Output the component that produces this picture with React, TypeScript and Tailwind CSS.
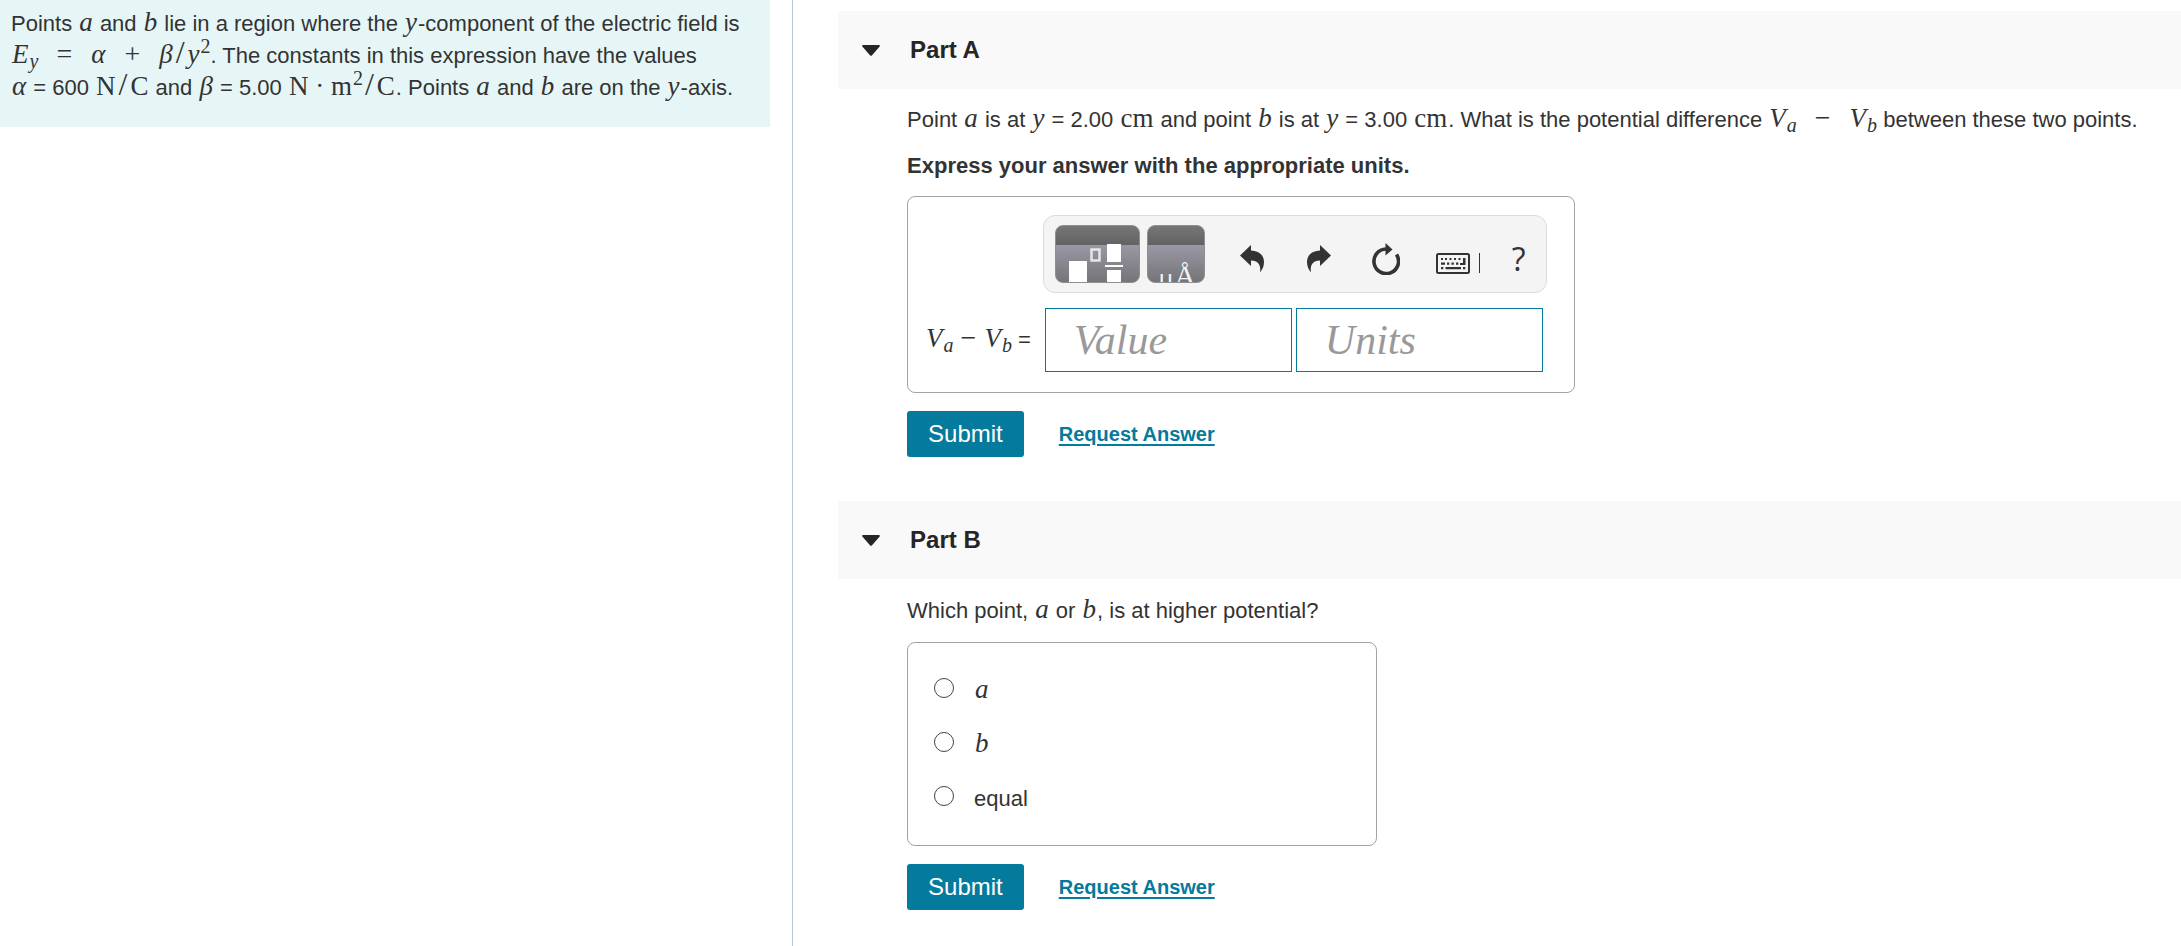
import { useState, type ReactNode } from "react";

const SERIF = "font-['Liberation_Serif',serif] leading-[0]";

function Var({ children }: { children: ReactNode }) {
  return <i className={`${SERIF} mx-px text-[27px] italic`}>{children}</i>;
}

function Unit({ children }: { children: ReactNode }) {
  return <span className={`${SERIF} mx-px text-[27px]`}>{children}</span>;
}

function Slash() {
  return <span className={`${SERIF} mx-[2px] text-[32px]`}>/</span>;
}

function Op({ children, wide = false }: { children: ReactNode; wide?: boolean }) {
  return <span className={`${SERIF} text-[28px] ${wide ? "mx-[18px]" : "mx-[7px]"}`}>{children}</span>;
}

function Sub({ children }: { children: ReactNode }) {
  return <sub className={`${SERIF} text-xl leading-[0] italic`}>{children}</sub>;
}

function Sup({ children }: { children: ReactNode }) {
  return <sup className={`${SERIF} text-xl leading-[0]`}>{children}</sup>;
}

function PotentialDifference({ wide = false }: { wide?: boolean }) {
  return (
    <span className="whitespace-nowrap">
      <Var>V</Var>
      <Sub>a</Sub>
      <Op wide={wide}>−</Op>
      <Var>V</Var>
      <Sub>b</Sub>
    </span>
  );
}

function PartHeader({ title, open, onToggle }: { title: string; open: boolean; onToggle: () => void }) {
  return (
    <h2 className="bg-[#f9f9f9]">
      <button
        type="button"
        aria-expanded={open}
        onClick={onToggle}
        className="flex h-[78px] w-full items-center gap-[30px] pl-6 text-left text-2xl font-bold text-[#252525]"
      >
        <svg width="18" height="11" viewBox="0 0 18 11" className={open ? "" : "-rotate-90"} aria-hidden="true">
          <path d="M1 0h16q1.400 .4.500 1.700L10 10.200q-1 1-2 0L.500 1.700Q-.400.400 1 0Z" fill="#252525" />
        </svg>
        {title}
      </button>
    </h2>
  );
}

function Actions() {
  return (
    <div className="mt-[18px] flex items-center gap-[35px]">
      <button type="submit" className="h-[46px] rounded-[3px] bg-[#047a9c] px-[21px] text-2xl text-white">
        Submit
      </button>
      <a href="#answer" className="text-xl font-bold text-[#047a9c] underline decoration-2 underline-offset-3">
        Request Answer
      </a>
    </div>
  );
}

const PALETTE =
  "h-[58px] overflow-hidden rounded-lg border border-[#8f8f8f] bg-[linear-gradient(#767676,#626262_19px,#9a98a4_19px,#757478)]";

function Toolbar() {
  return (
    <div className="flex h-[78px] items-center rounded-xl border border-[#dcdcdc] bg-[#f4f4f4] pl-[11px]">
      <button type="button" aria-label="Templates" className={`${PALETTE} w-[85px]`}>
        <svg width="83" height="56" viewBox="1 1 83 56" aria-hidden="true">
          <path d="M14 36h18v22H14zM52 19h14v18H52zM50 40h18v2H50zM52 45h14v13H52z" fill="#fff" />
          <path d="M36.500 24.500h8v11h-8z" fill="none" stroke="#e6e6e6" strokeWidth="2.500" />
        </svg>
      </button>
      <button type="button" aria-label="Symbols" className={`${PALETTE} ml-[7px] w-[58px]`}>
        <svg width="56" height="56" viewBox="1 1 56 56" fill="#f2f2f2" aria-hidden="true">
          <text x="19" y="62" fontSize="24" textAnchor="middle" fontFamily="Liberation Sans, sans-serif">
            μ
          </text>
          <text x="38" y="61" fontSize="30" textAnchor="middle" fontFamily="Liberation Serif, serif">
            Å
          </text>
        </svg>
      </button>
      <div className="flex items-center pt-[10px]">
        <button type="button" aria-label="Undo" className="ml-[35px]">
          <svg width="24" height="28" viewBox="0 0 24 28" fill="#333" aria-hidden="true">
            <path d="M0 10.500 11 0v5.500c7 .3 13 3.800 13 11.500 0 4.500-1.800 7.800-4 10.500 1-6.500-.8-11.700-9-12v5.500Z" />
          </svg>
        </button>
        <button type="button" aria-label="Redo" className="ml-[43px]">
          <svg width="24" height="28" viewBox="0 0 24 28" fill="#333" aria-hidden="true">
            <path d="M24 10.500 13 0v5.500C6 5.800 0 9.300 0 17c0 4.500 1.800 7.800 4 10.500-1-6.500.8-11.700 9-12v5.500Z" />
          </svg>
        </button>
        <button type="button" aria-label="Reset" className="ml-[41px]">
          <svg width="28" height="32" viewBox="0 0 28 32" aria-hidden="true">
            <path d="M14 6A12.300 12.300 0 1 0 24.500 11.500" fill="none" stroke="#333" strokeWidth="3.600" />
            <path d="M13.500 0v12.500L20.500 6.500Z" fill="#333" />
          </svg>
        </button>
        <button type="button" aria-label="Keyboard shortcuts" className="mt-2 ml-9 flex items-center gap-[9px]">
          <svg width="34" height="21" viewBox="0 0 34 21" fill="#333" aria-hidden="true">
            <rect x="1" y="1" width="32" height="19" rx="1.500" fill="none" stroke="#333" strokeWidth="2" />
            <path d="M5 5h2v2H5zM9 5h2v2H9zM13.500 5h2v2h-2zM18 5h2v2h-2zM22.500 5h2v2h-2zM27 5h2.500v7H24v-2h3zM5 9.500h4v2.300H5zM11 9.500h2.300v2.300H11zM15.500 9.500h2.300v2.300h-2.300zM20 9.500h2.300v2.300H20zM5 14h2.300v2.300H5zM9.500 14h15.500v2.300H9.500zM27 14h2.300v2.300H27z" />
          </svg>
          <span className="h-5 w-px bg-[#333]" />
        </button>
        <button
          type="button"
          aria-label="Help"
          className="ml-8 font-['Open_Sans',sans-serif] text-[32px] leading-none text-[#333]"
        >
          ?
        </button>
      </div>
    </div>
  );
}

function AnswerField({ label }: { label: string }) {
  return (
    <input
      type="text"
      aria-label={label}
      placeholder={label}
      className="h-16 w-[247px] border border-[#047a9c] bg-white pl-7 font-['Liberation_Serif',serif] text-[42px] italic outline-none placeholder:text-[#999]"
    />
  );
}

function PartA() {
  const [open, setOpen] = useState(true);
  return (
    <section>
      <PartHeader title="Part A" open={open} onToggle={() => setOpen(!open)} />
      {open && (
        <form className="pt-[15px] pl-[69px]" onSubmit={(e) => e.preventDefault()}>
          <p>
            Point <Var>a</Var> is at <Var>y</Var> = 2.00 <Unit>cm</Unit> and point <Var>b</Var> is at{" "}
            <Var>y</Var> = 3.00 <Unit>cm</Unit>. What is the potential difference{" "}
            <PotentialDifference wide /> between these two points.
          </p>
          <p className="mt-[14px] font-bold">Express your answer with the appropriate units.</p>
          <div className="mt-[14px] grid w-fit grid-cols-[auto_auto] gap-x-3 gap-y-[15px] rounded-lg border border-[#a3a3a3] pt-[18px] pr-[27px] pb-5 pl-[17px]">
            <div className="col-start-2">
              <Toolbar />
            </div>
            <div className="col-start-1 self-center">
              <PotentialDifference /> =
            </div>
            <div className="flex gap-1 pr-1 pl-[2px]">
              <AnswerField label="Value" />
              <AnswerField label="Units" />
            </div>
          </div>
          <Actions />
        </form>
      )}
    </section>
  );
}

const CHOICES = [
  { id: "a", label: <Var>a</Var> },
  { id: "b", label: <Var>b</Var> },
  { id: "equal", label: "equal" },
];

function PartB() {
  const [open, setOpen] = useState(true);
  return (
    <section className="mt-11">
      <PartHeader title="Part B" open={open} onToggle={() => setOpen(!open)} />
      {open && (
        <form className="pt-4 pl-[69px]" onSubmit={(e) => e.preventDefault()}>
          <p>
            Which point, <Var>a</Var> or <Var>b</Var>, is at higher potential?
          </p>
          <div className="mt-[15px] flex w-[470px] max-w-full flex-col gap-[22px] rounded-lg border border-[#a3a3a3] pt-8 pb-[30px] pl-[26px]">
            {CHOICES.map((choice) => (
              <label key={choice.id} className="flex h-8 items-start gap-5">
                <input
                  type="radio"
                  name="potential"
                  value={choice.id}
                  className="mt-[3px] size-5 appearance-none rounded-full border border-[#444] bg-white checked:border-[6px] checked:border-[#047a9c]"
                />
                <span>{choice.label}</span>
              </label>
            ))}
          </div>
          <Actions />
        </form>
      )}
    </section>
  );
}

export default function App() {
  return (
    <div className="flex min-h-screen bg-white font-['Liberation_Sans',Arial,sans-serif] text-[22px] leading-8 text-[#333]">
      <aside className="w-4/11 border-r border-[#b9c8d6] pr-[22px]">
        <p className="bg-[#e6f6f7] px-[11px] pt-2 pb-[23px]">
          Points <Var>a</Var> and <Var>b</Var> lie in a region where the <Var>y</Var>-component of the electric
          field is{" "}
          <span className="whitespace-nowrap">
            <Var>E</Var>
            <Sub>y</Sub>
            <Op wide>=</Op>
            <Var>α</Var>
            <Op wide>+</Op>
            <Var>β</Var>
            <Slash />
            <Var>y</Var>
            <Sup>2</Sup>.
          </span>{" "}
          The constants in this expression have the values{" "}
          <span className="whitespace-nowrap">
            <Var>α</Var> = 600 <Unit>N</Unit>
            <Slash />
            <Unit>C</Unit>
          </span>{" "}
          and{" "}
          <span className="whitespace-nowrap">
            <Var>β</Var> = 5.00 <Unit>N · m</Unit>
            <Sup>2</Sup>
            <Slash />
            <Unit>C</Unit>.
          </span>{" "}
          Points <Var>a</Var> and <Var>b</Var> are on the <Var>y</Var>-axis.
        </p>
      </aside>
      <main className="min-w-0 flex-1 pt-[11px] pl-[45px]">
        <PartA />
        <PartB />
      </main>
    </div>
  );
}
